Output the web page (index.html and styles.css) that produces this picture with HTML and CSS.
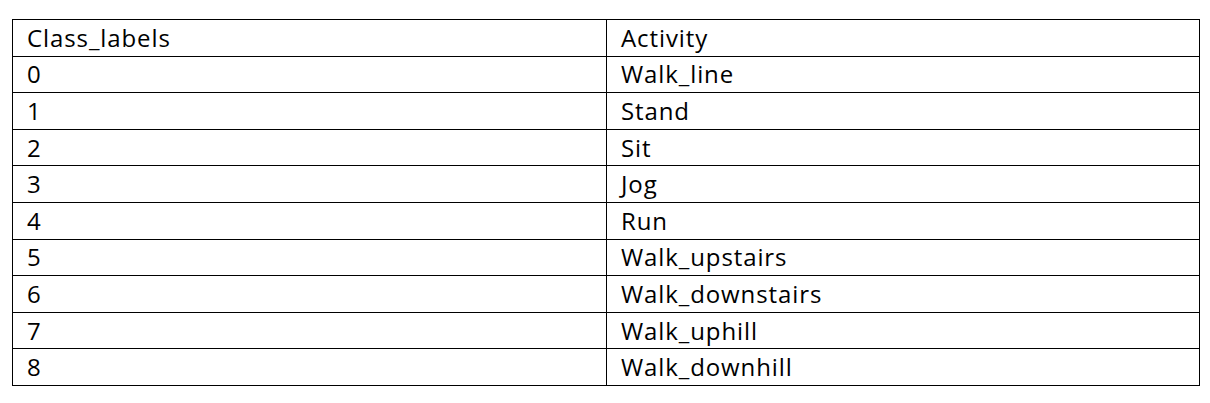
FILE: index.html
```html
<!DOCTYPE html>
<html>
<head>
<meta charset="utf-8">
<link rel="stylesheet" href="styles.css">
</head>
<body>
<table class="grid">
  <tr><td class="c1">Class_labels</td><td class="c2">Activity</td></tr>
  <tr><td class="c1">0</td><td class="c2">Walk_line</td></tr>
  <tr><td class="c1">1</td><td class="c2">Stand</td></tr>
  <tr><td class="c1">2</td><td class="c2">Sit</td></tr>
  <tr><td class="c1">3</td><td class="c2">Jog</td></tr>
  <tr><td class="c1">4</td><td class="c2">Run</td></tr>
  <tr><td class="c1">5</td><td class="c2">Walk_upstairs</td></tr>
  <tr><td class="c1">6</td><td class="c2">Walk_downstairs</td></tr>
  <tr><td class="c1">7</td><td class="c2">Walk_uphill</td></tr>
  <tr><td class="c1">8</td><td class="c2">Walk_downhill</td></tr>
</table>
</body>
</html>
```
FILE: styles.css
```css
html, body {
  margin: 0;
  padding: 0;
  background: #ffffff;
}
body {
  padding: 19px 0 0 12px;
  font-family: "Open Sans", "Liberation Sans", sans-serif;
  color: #000000;
}
.grid {
  border-collapse: collapse;
  width: 1188px;
  table-layout: fixed;
}
.grid tr {
  height: 36.6px;
}
.grid td {
  border: 1.5px solid #000000;
  padding: 0 0 0 14px;
  font-size: 24px;
  letter-spacing: 0.9px;
  line-height: 34px;
  vertical-align: middle;
  white-space: nowrap;
}
.grid td.c1 {
  width: 579px;
}
```
